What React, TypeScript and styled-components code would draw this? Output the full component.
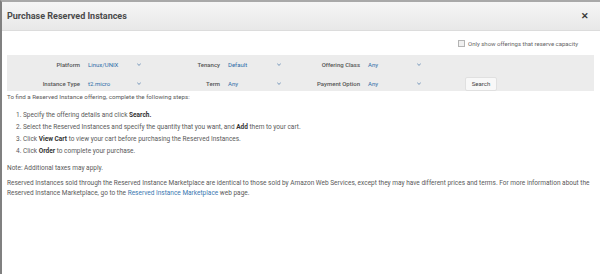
import React from "react";
import styled, { createGlobalStyle } from "styled-components";

const GlobalStyle = createGlobalStyle`
  html, body {
    margin: 0;
    padding: 0;
    background: #ffffff;
  }
  body {
    font-family: Roboto, "Liberation Sans", Arial, sans-serif;
  }
`;

const Frame = styled.div`
  width: 600px;
  height: 274px;
  box-sizing: border-box;
  border-top: 2px solid #a9a9a9;
  border-left: 2px solid #808080;
  display: flex;
  flex-direction: column;
  background: #ffffff;
  overflow: hidden;
`;

const Header = styled.div`
  height: 28px;
  display: flex;
  align-items: center;
  justify-content: space-between;
  padding: 0 11px 0 5px;
  background: linear-gradient(#f6f6f6, #e8e8e8);
  border-bottom: 1px solid #dcdcdc;
`;

const Title = styled.h1`
  margin: 0;
  font-size: 9px;
  font-weight: 700;
  color: #4a4a4a;
`;

const Close = styled.span`
  font-size: 9px;
  font-weight: 700;
  color: #3a3a3a;
  line-height: 1;
`;

const Body = styled.div`
  padding: 8px 5px 0 5px;
  color: #5a5a5a;
  font-size: 6.5px;
`;

const CheckRow = styled.label`
  display: flex;
  justify-content: flex-end;
  align-items: center;
  gap: 3px;
  padding-right: 17px;
  height: 9px;
  font-size: 6px;
  color: #666666;
`;

const Box = styled.span`
  width: 5px;
  height: 5px;
  border: 1px solid #b4b4b4;
  background: #f0f0f0;
`;

const Panel = styled.div`
  margin-top: 7px;
  width: 587px;
  height: 36px;
  box-sizing: border-box;
  padding: 1px 0;
  background: #ececec;
  display: grid;
  grid-template-columns: 73px 67px 73px 67px 73px 67px auto;
  grid-template-rows: 17px 17px;
  row-gap: 2px;
  align-items: center;
  font-size: 6px;
`;

const Label = styled.span`
  text-align: right;
  font-weight: 500;
  color: #555555;
`;

const Select = styled.span`
  display: flex;
  justify-content: space-between;
  align-items: center;
  padding: 0 6px 0 8px;
  color: #2d6ca8;
`;

const Chevron = styled.svg`
  width: 4px;
  height: 3px;
`;

const ButtonCell = styled.div`
  padding-left: 38px;
`;

const Button = styled.button`
  font-family: inherit;
  font-size: 6px;
  color: #444444;
  background: #f8f8f8;
  border: 1px solid #e0e0e0;
  border-radius: 2px;
  height: 14px;
  width: 32px;
  padding: 0;
`;

const Text = styled.p<{ $top?: number; $size?: number }>`
  margin: ${({ $top }) => $top ?? 0}px 0 0 0;
  font-size: ${({ $size }) => ($size ? `${$size}px` : "inherit")};
  line-height: 10px;
`;

const Steps = styled.ol`
  margin: 7px 0 0 0;
  padding-left: 16px;
  li {
    line-height: 12px;
  }
  b {
    color: #333333;
  }
`;

const Link = styled.a`
  color: #3a78b0;
  text-decoration: none;
`;

const Arrow = () => (
  <Chevron viewBox="0 0 4 3">
    <path d="M0.3 0.5 L2 2.5 L3.7 0.5" fill="none" stroke="#7b9bbd" strokeWidth="1" />
  </Chevron>
);

const Field = ({ label, value }: { label: string; value: string }) => (
  <>
    <Label>{label}</Label>
    <Select>
      {value}
      <Arrow />
    </Select>
  </>
);

export default function App() {
  return (
    <>
      <GlobalStyle />
      <Frame>
        <Header>
          <Title>Purchase Reserved Instances</Title>
          <Close>✕</Close>
        </Header>
        <Body>
          <CheckRow>
            <Box />
            Only show offerings that reserve capacity
          </CheckRow>
          <Panel>
            <Field label="Platform" value="Linux/UNIX" />
            <Field label="Tenancy" value="Default" />
            <Field label="Offering Class" value="Any" />
            <div />
            <Field label="Instance Type" value="t2.micro" />
            <Field label="Term" value="Any" />
            <Field label="Payment Option" value="Any" />
            <ButtonCell>
              <Button>Search</Button>
            </ButtonCell>
          </Panel>
          <Text $top={1} $size={6.2}>
            To find a Reserved Instance offering, complete the following steps:
          </Text>
          <Steps>
            <li>
              Specify the offering details and click <b>Search.</b>
            </li>
            <li>
              Select the Reserved Instances and specify the quantity that you want, and <b>Add</b> them to your cart.
            </li>
            <li>
              Click <b>View Cart</b> to view your cart before purchasing the Reserved Instances.
            </li>
            <li>
              Click <b>Order</b> to complete your purchase.
            </li>
          </Steps>
          <Text $top={6}>Note: Additional taxes may apply.</Text>
          <Text $top={5}>
            Reserved Instances sold through the Reserved Instance Marketplace are identical to those sold by Amazon Web
            Services, except they may have different prices and terms. For more information about the Reserved Instance
            Marketplace, go to the <Link href="#">Reserved Instance Marketplace</Link> web page.
          </Text>
        </Body>
      </Frame>
    </>
  );
}
